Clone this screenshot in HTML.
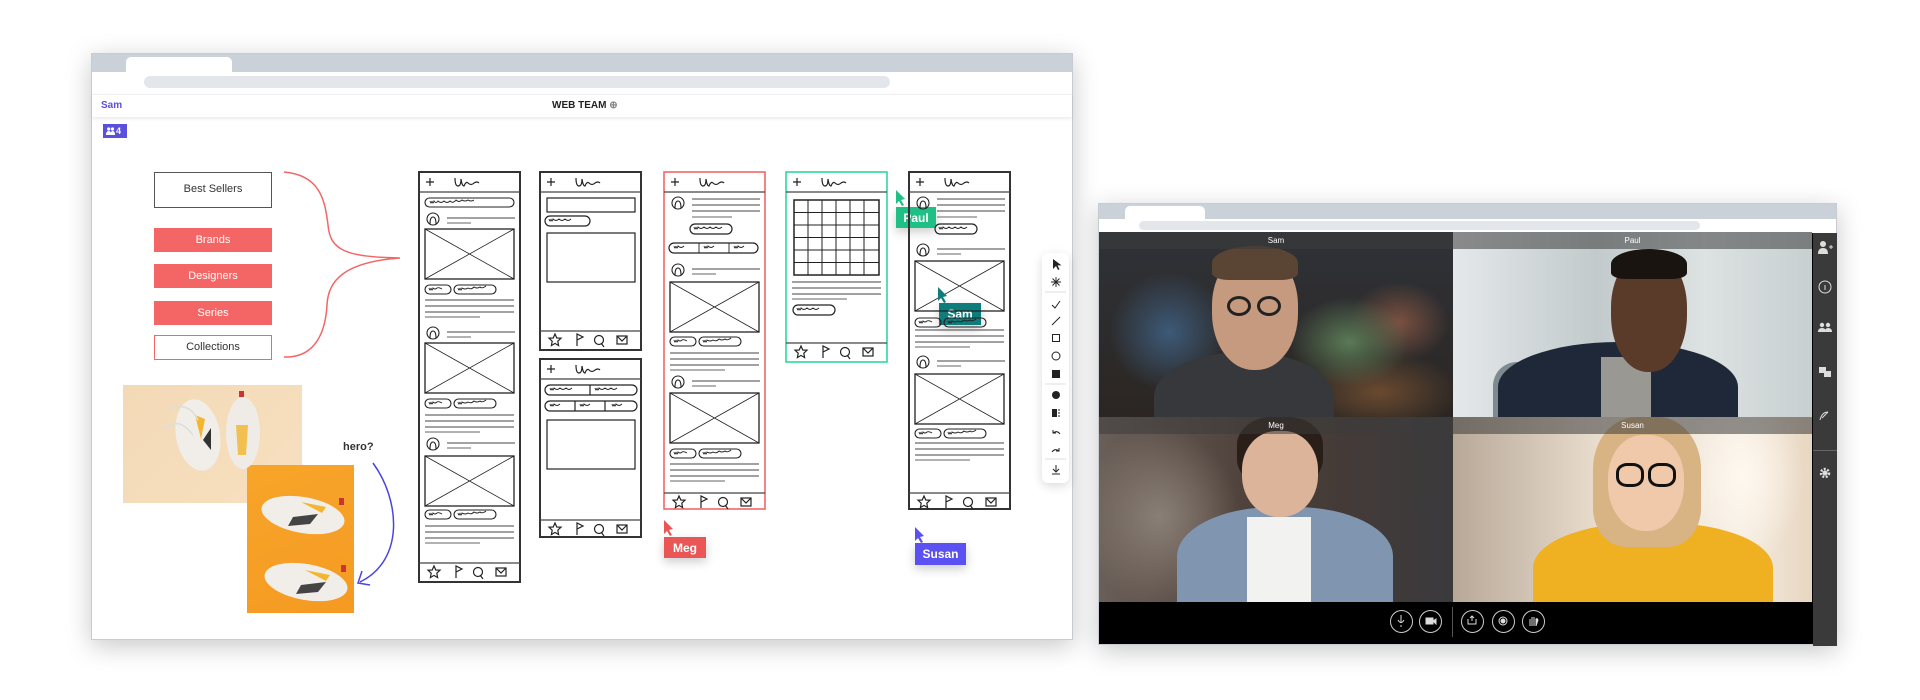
<!DOCTYPE html>
<html><head><meta charset="utf-8"><style>
*{margin:0;padding:0;box-sizing:border-box}
body{width:1920px;height:700px;background:#fff;position:relative;overflow:hidden;font-family:"Liberation Sans",sans-serif}
.abs{position:absolute}
.win{position:absolute;background:#fff;box-shadow:0 6px 24px rgba(0,0,0,.22);border:1px solid #c7ccd3}
.lbl{position:absolute;color:#fff;font-size:12px;font-weight:bold;display:flex;align-items:center;justify-content:center;box-shadow:0 4px 10px rgba(0,0,0,.2)}
.tile{position:absolute;overflow:hidden}
.name{position:absolute;left:0;right:0;top:0;height:17px;background:rgba(60,60,60,.55);color:#fff;font-size:8px;text-align:center;line-height:17px}
.cb{position:absolute;top:610px;width:23px;height:23px;border:1.2px solid #ccc;border-radius:50%}
</style></head><body>

<div class="win" style="left:91px;top:53px;width:982px;height:587px">
  <div class="abs" style="left:0;top:0;width:100%;height:18px;background:#cbd1d9"></div>
  <div class="abs" style="left:34px;top:3px;width:106px;height:15px;background:#fff;border-radius:5px 5px 0 0"></div>
  <div class="abs" style="left:52px;top:22px;width:746px;height:12px;background:#e3e6eb;border-radius:6px"></div>
  <div class="abs" style="left:0;top:40px;width:100%;height:23px;border-top:1px solid #eef0f3;box-shadow:0 2px 3px rgba(0,0,0,.08)"></div>
  <div class="abs" style="left:9px;top:46px;font-size:10px;font-weight:bold;color:#5b4fdb">Sam</div>
  <div class="abs" style="left:460px;top:46px;font-size:10px;font-weight:bold;color:#222">WEB TEAM <span style="color:#888">⊕</span></div>
  <div class="abs" style="left:11px;top:70px;width:24px;height:14px;background:#5b4fdb;color:#fff;font-size:9px;font-weight:bold;line-height:14px;padding-left:13px">4
    <svg class="abs" style="left:3px;top:3px" width="9" height="8" viewBox="0 0 9 8"><circle cx="2.7" cy="2" r="1.6" fill="#fff"/><circle cx="6.5" cy="2" r="1.6" fill="#fff"/><path d="M0 8q0-4 2.7-4q2.7 0 2.7 4zM4.6 8q0-4 2-4q2.4 0 2.4 4z" fill="#fff"/></svg>
  </div>
</div>

<div class="abs" style="left:154px;top:172px;width:118px;height:36px;border:1.5px solid #555;font-size:11px;color:#333;text-align:center;line-height:33px">Best Sellers</div>
<div class="abs" style="left:154px;top:228px;width:118px;height:24px;background:#f46565;font-size:11px;color:#fff;text-align:center;line-height:24px">Brands</div>
<div class="abs" style="left:154px;top:264px;width:118px;height:24px;background:#f46565;font-size:11px;color:#fff;text-align:center;line-height:24px">Designers</div>
<div class="abs" style="left:154px;top:301px;width:118px;height:24px;background:#f46565;font-size:11px;color:#fff;text-align:center;line-height:24px">Series</div>
<div class="abs" style="left:154px;top:335px;width:118px;height:25px;border:1.5px solid #f46565;font-size:11px;color:#333;text-align:center;line-height:22px">Collections</div>

<div class="abs" style="left:123px;top:385px;width:179px;height:118px;background:linear-gradient(135deg,#f3d9b6,#f7e0c0)"></div>
<div class="abs" style="left:247px;top:465px;width:107px;height:148px;background:linear-gradient(160deg,#f7a52a,#f59a22)"></div>
<svg class="abs" style="left:123px;top:385px" width="231" height="228" viewBox="0 0 231 228">
 <ellipse cx="75" cy="50" rx="22" ry="36" transform="rotate(-10 75 50)" fill="#f1eee9"/>
 <ellipse cx="120" cy="48" rx="17" ry="36" fill="#efece7"/>
 <path d="M72 30l10 4-4 20z" fill="#f2b630"/><path d="M80 55l8-12 0 22z" fill="#333"/>
 <path d="M113 40l12 0-2 30-8 0z" fill="#f2c050"/><rect x="116" y="6" width="5" height="6" fill="#c33"/>
 <path d="M45 25q20 -10 30 10M40 45q15-15 30 5" fill="none" stroke="#ddd" stroke-width="1.5"/>
 <ellipse cx="180" cy="130" rx="42" ry="18" transform="rotate(10 180 130)" fill="#f1eee9"/>
 <ellipse cx="183" cy="197" rx="42" ry="18" transform="rotate(10 183 197)" fill="#f1eee9"/>
 <path d="M170 132l25-3-8 10-22 2z" fill="#444"/><path d="M178 200l25-3-8 10-22 2z" fill="#444"/>
 <path d="M178 117l25 5-4 6z" fill="#f2b630"/><path d="M182 185l25 5-4 6z" fill="#f2b630"/>
 <rect x="216" y="113" width="5" height="7" fill="#c33"/><rect x="218" y="180" width="5" height="7" fill="#c33"/>
</svg>
<div class="abs" style="left:343px;top:441px;font-size:11px;font-weight:bold;color:#333">hero?</div>

<div class="abs" style="left:1042px;top:253px;width:27px;height:230px;background:#fff;border-radius:6px;box-shadow:0 3px 10px rgba(0,0,0,.15)"></div>

<div class="win" style="left:1098px;top:203px;width:739px;height:442px;background:#000">
  <div class="abs" style="left:0;top:0;width:100%;height:15px;background:#cbd1d9"></div>
  <div class="abs" style="left:26px;top:2px;width:80px;height:13px;background:#fff;border-radius:5px 5px 0 0"></div>
  <div class="abs" style="left:0;top:15px;width:100%;height:14px;background:#fff"></div>
  <div class="abs" style="left:40px;top:17px;width:561px;height:9px;background:#e3e6eb;border-radius:5px"></div>
  <div class="abs" style="left:714px;top:29px;width:24px;height:413px;background:#3a3a3a"></div>
  <div class="abs" style="left:714px;top:246px;width:24px;height:1px;background:#666"></div>
</div>

<div class="tile" style="left:1099px;top:232px;width:354px;height:185px;background:radial-gradient(ellipse 60px 45px at 250px 110px,#5a7a55,transparent),radial-gradient(ellipse 50px 40px at 300px 90px,#7a5040,transparent),radial-gradient(ellipse 60px 60px at 70px 100px,#3d5a78,transparent),radial-gradient(ellipse 80px 40px at 280px 160px,#6a4a30,transparent),linear-gradient(#2f3238,#2b2622)">
  <div class="abs" style="left:55px;top:120px;width:180px;height:90px;border-radius:50% 50% 0 0;background:#36383c"></div>
  <div class="abs" style="left:113px;top:20px;width:86px;height:118px;border-radius:45% 45% 48% 48%;background:#c59a7e"></div>
  <div class="abs" style="left:113px;top:14px;width:86px;height:34px;border-radius:50% 50% 20% 20%;background:#5a4434"></div>
  <div class="abs" style="left:128px;top:64px;width:24px;height:20px;border:3px solid #222;border-radius:50%"></div>
  <div class="abs" style="left:158px;top:64px;width:24px;height:20px;border:3px solid #222;border-radius:50%"></div>
  <div class="name">Sam</div>
</div>
<div class="tile" style="left:1453px;top:232px;width:359px;height:185px;background:linear-gradient(90deg,#e4e8ea,#c2cacc 40%,#dde2e2 70%,#c7cfd0)">
  <div class="abs" style="left:40px;top:130px;width:60px;height:60px;background:#7d8a90;border-radius:40% 40% 0 0"></div>
  <div class="abs" style="left:45px;top:110px;width:240px;height:90px;border-radius:50% 50% 0 0;background:#1f2838"></div>
  <div class="abs" style="left:148px;top:125px;width:50px;height:70px;background:#9a9892"></div>
  <div class="abs" style="left:158px;top:22px;width:76px;height:118px;border-radius:45% 45% 48% 48%;background:#5a3a28"></div>
  <div class="abs" style="left:158px;top:17px;width:76px;height:30px;border-radius:50% 50% 20% 20%;background:#1a1410"></div>
  <div class="name">Paul</div>
</div>
<div class="tile" style="left:1099px;top:417px;width:354px;height:185px;background:radial-gradient(ellipse 80px 90px at 60px 100px,#8a7f76,transparent),linear-gradient(90deg,#6a5e58,#4a3c36 50%,#3a3a3c)">
  <div class="abs" style="left:78px;top:90px;width:216px;height:110px;border-radius:45% 45% 0 0;background:#7f95b0"></div>
  <div class="abs" style="left:148px;top:100px;width:64px;height:90px;background:#f2f2f0"></div>
  <div class="abs" style="left:138px;top:0;width:86px;height:70px;border-radius:40%;background:#2a1e18"></div>
  <div class="abs" style="left:143px;top:14px;width:76px;height:86px;border-radius:45% 45% 48% 48%;background:#dcb49a"></div>
  <div class="name">Meg</div>
</div>
<div class="tile" style="left:1453px;top:417px;width:359px;height:185px;background:radial-gradient(ellipse 60px 90px at 290px 60px,#fff8ee,transparent),linear-gradient(90deg,#b8a898,#e8dccd 40%,#f4ece2 80%,#e8d6c0)">
  <div class="abs" style="left:80px;top:106px;width:240px;height:100px;border-radius:45% 45% 0 0;background:#efb022"></div>
  <div class="abs" style="left:140px;top:0;width:108px;height:130px;border-radius:40% 40% 30% 30%;background:#d8b384"></div>
  <div class="abs" style="left:155px;top:18px;width:76px;height:96px;border-radius:45% 45% 48% 48%;background:#efc9aa"></div>
  <div class="abs" style="left:163px;top:46px;width:28px;height:24px;border:3px solid #111;border-radius:40%"></div>
  <div class="abs" style="left:195px;top:46px;width:28px;height:24px;border:3px solid #111;border-radius:40%"></div>
  <div class="name">Susan</div>
</div>
<div class="cb" style="left:1390px"></div><div class="cb" style="left:1419px"></div>
<div class="abs" style="left:1452px;top:607px;width:1px;height:30px;background:#555"></div>
<div class="cb" style="left:1461px"></div><div class="cb" style="left:1492px"></div><div class="cb" style="left:1522px"></div>

<div class="lbl" style="left:896px;top:207px;width:40px;height:21px;background:#1fbf85">Paul</div>
<div class="lbl" style="left:939px;top:303px;width:42px;height:22px;background:#0e7c7b">Sam</div>
<div class="lbl" style="left:664px;top:537px;width:42px;height:21px;background:#ea5656">Meg</div>
<div class="lbl" style="left:915px;top:543px;width:51px;height:22px;background:#5b50f0">Susan</div>

<svg class="abs" style="left:0;top:0" width="1920" height="700" viewBox="0 0 1920 700">
<defs>
 <g id="hdr"><path d="M7 10h8M11 6v8" stroke="#222" stroke-width="1.2"/><path d="M36 6q0 8 3 8q3 0 3-7q1 7 3 7q2-5 4-3q3 3 6 0q3-2 5 0" fill="none" stroke="#222" stroke-width="1.2"/><path d="M0 20h101" stroke="#444" stroke-width="1.3"/></g>
 <g id="ftr" fill="none" stroke="#222" stroke-width="1.2"><path d="M0 0h101" stroke="#444" stroke-width="1.3"/>
  <polygon transform="translate(15 9)" points="0,-6 1.8,-2 6,-1.8 2.8,1.2 3.6,5.6 0,3.4 -3.6,5.6 -2.8,1.2 -6,-1.8 -1.8,-2"/>
  <path transform="translate(39 9)" d="M-2 6V-6L4-3L-2 0"/>
  <g transform="translate(59 9)"><circle r="4.5"/><path d="M2 3L5 7"/></g>
  <g transform="translate(82 9)"><rect x="-5" y="-4" width="10" height="8"/><path d="M-5-4L0 1L5-4"/></g></g>
 <g id="img" fill="none" stroke="#222" stroke-width="1.3"><rect width="89" height="50"/><path d="M0 0L89 50M89 0L0 50" stroke-width=".8"/></g>
 <g id="pills" fill="none" stroke="#222" stroke-width="1.1"><rect width="26" height="9" rx="4.5"/><rect x="29" width="42" height="9" rx="4.5"/><path d="M4 3q1 4 2 0q1 4 2 0q2 2 4 0q2-1 5 1M33 3q1 4 2 0q1 4 2 0q3 2 6 0q3 2 6-1q3 2 6 0q2 2 6-1" stroke-width=".9"/></g>
 <g id="lines" stroke-width="1"><path d="M0 0h89M0 6h89M0 12h89" stroke="#444"/><path d="M0 17h55" stroke="#999" stroke-width="1.6"/></g>
 <g id="av" fill="none" stroke="#222" stroke-width="1.1"><circle cx="6" cy="6" r="6"/><path d="M3 11q0-7 3-7q3 0 3 7"/><path d="M20 5h68" stroke="#444"/><path d="M20 10h24" stroke="#999" stroke-width="1.5"/></g>
 <g id="av4" fill="none" stroke="#222" stroke-width="1.1"><circle cx="6" cy="6" r="6"/><path d="M3 11q0-7 3-7q3 0 3 7"/><path d="M20 2h68M20 8h68M20 14h68" stroke="#444"/><path d="M20 20h40" stroke="#999" stroke-width="1.5"/></g>
</defs>

<path d="M284 172C320 175 325 200 328 225C330 250 345 257 400 258C345 262 328 280 327 305C325 340 310 358 284 357" fill="none" stroke="#f46565" stroke-width="1.5"/>
<path d="M373 463C400 500 405 560 360 582M362 571L358 583L370 585" fill="none" stroke="#4b45e0" stroke-width="1.5"/>

<g transform="translate(419 172)">
 <rect width="101" height="410" fill="none" stroke="#333" stroke-width="2"/>
 <use href="#hdr"/>
 <rect x="6" y="26" width="89" height="9" rx="4.5" fill="none" stroke="#222" stroke-width="1.1"/>
 <path d="M11 29q1 4 2 0q1 4 2 0q2 3 4 0q3 3 6 0q3 3 6 0q3 3 6-1q3 3 6 0q3 2 6 0q3 2 6 0" fill="none" stroke="#222" stroke-width=".9"/>
 <use href="#av" x="8" y="41"/><use href="#img" x="6" y="57"/><use href="#pills" x="6" y="113"/><use href="#lines" x="6" y="128"/>
 <use href="#av" x="8" y="155"/><use href="#img" x="6" y="171"/><use href="#pills" x="6" y="227"/><use href="#lines" x="6" y="243"/>
 <use href="#av" x="8" y="266"/><use href="#img" x="6" y="284"/><use href="#pills" x="6" y="338"/><use href="#lines" x="6" y="354"/>
 <use href="#ftr" y="391"/>
</g>
<g transform="translate(540 172)" fill="none" stroke="#222" stroke-width="1.2">
 <rect width="101" height="178" stroke="#333" stroke-width="2"/><use href="#hdr"/>
 <rect x="7" y="26" width="88" height="14"/><rect x="5" y="44" width="45" height="10" rx="5"/>
 <path d="M9 47q1 4 2 0q1 4 2 0q3 3 6 0q3 3 6 0q3 3 6 0" stroke-width=".9"/>
 <rect x="7" y="61" width="88" height="49"/><use href="#ftr" y="159"/>
</g>
<g transform="translate(540 359)" fill="none" stroke="#222" stroke-width="1.2">
 <rect width="101" height="178" stroke="#333" stroke-width="2"/><use href="#hdr"/>
 <rect x="5" y="26" width="92" height="10" rx="5"/><path d="M50 26v10"/>
 <path d="M10 29q1 4 2 0q1 4 2 0q3 3 6 0q3 3 6 0q3 3 6 0M55 29q1 4 2 0q1 4 2 0q3 3 6 0q3 3 6 0q3 3 6 0" stroke-width=".9"/>
 <rect x="5" y="42" width="92" height="10" rx="5"/><path d="M35 42v10M65 42v10"/>
 <path d="M10 45q1 4 2 0q1 4 2 0q3 3 6 0M40 45q1 4 2 0q1 4 2 0q3 3 6 0M72 45q1 4 2 0q1 4 2 0q3 3 6 0" stroke-width=".9"/>
 <rect x="7" y="61" width="88" height="49"/><use href="#ftr" y="161"/>
</g>
<g transform="translate(664 172)" fill="none" stroke="#222" stroke-width="1.2">
 <rect width="101" height="337" stroke="#f46565" stroke-width="1.6"/><use href="#hdr"/>
 <use href="#av4" x="8" y="25"/>
 <rect x="26" y="52" width="42" height="10" rx="5"/><path d="M30 55q1 4 2 0q1 4 2 0q3 3 6 0q3 3 6 0q3 3 6 0q3 3 6 0" stroke-width=".9"/>
 <rect x="5" y="71" width="89" height="10" rx="5"/><path d="M35 71v10M65 71v10M10 74q1 4 2 0q1 4 2 0q3 3 6 0M40 74q1 4 2 0q1 4 2 0q3 3 6 0M70 74q1 4 2 0q1 4 2 0q3 3 6 0" stroke-width=".9"/>
 <use href="#av" x="8" y="92"/><use href="#img" x="6" y="110"/><use href="#pills" x="6" y="165"/><use href="#lines" x="6" y="181"/>
 <use href="#av" x="8" y="204"/><use href="#img" x="6" y="221"/><use href="#pills" x="6" y="277"/><use href="#lines" x="6" y="292"/>
 <use href="#ftr" y="321"/>
</g>
<g transform="translate(786 172)" fill="none" stroke="#222" stroke-width="1.2">
 <rect width="101" height="190" stroke="#2ed89a" stroke-width="1.6"/><use href="#hdr"/>
 <rect x="8" y="28" width="85" height="75" stroke-width="1.5"/>
 <path d="M22 28v75M36 28v75M50 28v75M64 28v75M78 28v75M8 40.5h85M8 53h85M8 65.5h85M8 78h85M8 90.5h85" stroke-width="1"/>
 <use href="#lines" x="6" y="110"/>
 <rect x="7" y="133" width="42" height="10" rx="5"/><path d="M11 136q1 4 2 0q1 4 2 0q3 3 6 0q3 3 6 0q3 3 6 0" stroke-width=".9"/>
 <use href="#ftr" y="171"/>
</g>
<g transform="translate(909 172)" fill="none" stroke="#222" stroke-width="1.2">
 <rect width="101" height="337" stroke="#333" stroke-width="2"/><use href="#hdr"/>
 <use href="#av4" x="8" y="25"/>
 <rect x="26" y="52" width="42" height="10" rx="5"/><path d="M30 55q1 4 2 0q1 4 2 0q3 3 6 0q3 3 6 0q3 3 6 0q3 3 6 0" stroke-width=".9"/>
 <use href="#av" x="8" y="72"/><use href="#img" x="6" y="89"/><use href="#pills" x="6" y="146"/><use href="#lines" x="6" y="158"/>
 <use href="#av" x="8" y="184"/><use href="#img" x="6" y="202"/><use href="#pills" x="6" y="257"/><use href="#lines" x="6" y="271"/>
 <use href="#ftr" y="321"/>
</g>

<g fill="#222" stroke="#222" stroke-width="1">
 <path d="M1053 259l0 10 3-3 2 4 1.5-.8-2-3.8 4 0z" stroke="none"/>
 <path d="M1051 282h10M1056 277v10M1052.5 278.5l7 7M1059.5 278.5l-7 7" fill="none" stroke-width=".9"/>
 <path d="M1045 292h21M1045 384h21M1045 459h21" stroke="#ddd"/>
 <path d="M1052 305l3 3 5-7" fill="none"/>
 <path d="M1052 325l8-8" fill="none"/>
 <rect x="1052.5" y="334.5" width="7" height="7" fill="none"/>
 <circle cx="1056" cy="356" r="4" fill="none"/>
 <rect x="1052" y="370" width="8" height="8" stroke="none"/>
 <circle cx="1056" cy="395" r="4" stroke="none"/>
 <rect x="1052" y="409" width="5" height="8" stroke="none"/><path d="M1058 410h2M1058 413h2M1058 416h2" fill="none"/>
 <path d="M1060 434q-3-4-7-1M1053 430v3h3" fill="none"/>
 <path d="M1052 452q3-4 7-1M1059 448v3h-3" fill="none"/>
 <path d="M1056 465v6M1053 469l3 3 3-3M1052 474h8" fill="none"/>
</g>
<path d="M896 190v14l3-3 3 5 2-1-3-5 4-1z" fill="#1fbf85"/>
<path d="M938 287v14l3-3 3 5 2-1-3-5 4-1z" fill="#0e7c7b"/>
<path d="M664 520v14l3-3 3 5 2-1-3-5 4-1z" fill="#ea5656"/>
<path d="M915 527v14l3-3 3 5 2-1-3-5 4-1z" fill="#5b50f0"/>

<g fill="#ddd" stroke="#ddd">
 <circle cx="1823" cy="244" r="3" stroke="none"/><path d="M1818 254q0-6 5-6q5 0 5 6z" stroke="none"/><path d="M1829 247h4M1831 245v4" fill="none"/>
 <circle cx="1825" cy="287" r="6" fill="none"/><path d="M1825 285v5" fill="none"/>
 <circle cx="1822" cy="325" r="2.2" stroke="none"/><circle cx="1828" cy="325" r="2.2" stroke="none"/><path d="M1818 332q0-4 4-4q4 0 4 4zM1825 332q0-4 3-4q4 0 4 4z" stroke="none"/>
 <rect x="1819" y="367" width="7" height="6" stroke="none"/><rect x="1824" y="371" width="7" height="6" stroke="none"/>
 <path d="M1820 420q2-8 8-8M1822 418l6-6" fill="none"/>
 <circle cx="1825" cy="473" r="4" stroke-width="2.5" stroke-dasharray="2 1.5" fill="none"/><circle cx="1825" cy="473" r="2.5" stroke="none"/>
</g>
<g fill="none" stroke="#ddd" stroke-width="1">
 <path d="M1401 615v7M1398 620q3 5 6 0M1401 625v2"/>
 <rect x="1426" y="618" width="7" height="6" fill="#ddd"/><path d="M1433 621l3-2v5z" fill="#ddd"/>
 <path d="M1468 619v5h8v-5M1472 616v5M1470 618l2-2 2 2"/>
 <circle cx="1503" cy="621" r="4"/><circle cx="1503" cy="621" r="2" fill="#ddd"/>
 <path d="M1530 626v-7M1532 626v-9M1534 626v-9M1536 626v-7q1-1 2 1l-2 6z" fill="#ddd"/>
</g>
</svg>
</body></html>
